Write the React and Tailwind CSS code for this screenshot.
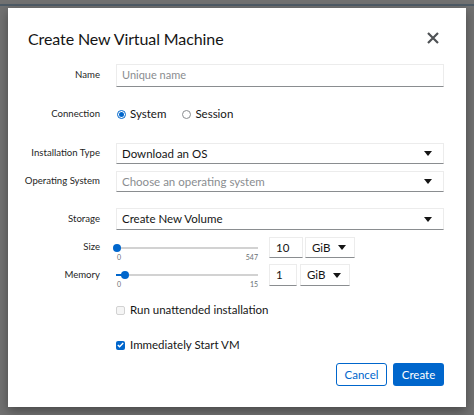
const font = { fontFamily: "Lato, 'Open Sans', sans-serif" };

function Caret({ className = "" }) {
  return (
    <svg className={className} width="8" height="5" viewBox="0 0 8 5">
      <path d="M0 0h8L4 5z" fill="#151515" />
    </svg>
  );
}

function Select({ value, placeholder }) {
  return (
    <div className="flex-1 h-full flex items-center justify-between pl-[5px] pr-[11px] border border-[#ececec] border-b-[#8a8d90] bg-white">
      <span className={value ? "text-[11.5px] text-[#151515]" : "text-[11.5px] text-[#8a8d90]"}>
        {value || placeholder}
      </span>
      <Caret />
    </div>
  );
}

function Row({ label, className = "", children }) {
  return (
    <div className={`flex items-center ${className}`}>
      <div className="w-[72px] shrink-0 flex justify-end whitespace-nowrap text-[9.6px] text-[#1f1f1f]">
        {label}
      </div>
      <div className="ml-[16px] flex-1 h-full flex items-center">{children}</div>
    </div>
  );
}

function Slider({ pos, max }) {
  return (
    <div className="w-[142px] flex flex-col self-start mt-[7px]">
      <div className="relative h-[8px] flex items-center">
        <div className="w-full h-[2px] bg-[#d2d2d2]" />
        <div className="absolute left-0 h-[2px] bg-[#0066cc]" style={{ width: pos }} />
        <div
          className="absolute w-[8px] h-[8px] rounded-full bg-[#0066cc]"
          style={{ left: pos - 4 }}
        />
      </div>
      <div className="flex justify-between text-[7px] leading-[8px] text-[#6a6e73] mt-[1px] pl-[1px]">
        <span>0</span>
        <span>{max}</span>
      </div>
    </div>
  );
}

function SizeInput({ value, inputW, gap }) {
  return (
    <div className="flex h-full ml-[11px]" style={{ gap }}>
      <div
        className="h-full flex items-center pl-[6px] border border-[#ececec] border-b-[#8a8d90] text-[11.5px] text-[#151515]"
        style={{ width: inputW }}
      >
        {value}
      </div>
      <div className="w-[50px] h-full flex items-center gap-[8px] pl-[6px] border border-[#ececec] border-b-[#8a8d90] text-[11.5px] text-[#151515]">
        GiB
        <Caret />
      </div>
    </div>
  );
}

export default function App() {
  return (
    <div className="w-[474px] h-[415px] bg-[#717171] overflow-hidden flex flex-col" style={font}>
      <div className="h-[4px]" />
      <div className="h-[2px] bg-[#4e5b66]" />
      <div className="ml-[8px] mt-[2px] w-[458px] h-[399px] bg-white shadow-[0_4px_10px_rgba(0,0,0,0.35)] flex flex-col pt-[20px] pl-[20px] pr-[22px]">
        <div className="h-[22px] flex items-center justify-between">
          <h1 className="text-[16px] leading-[22px] text-[#151515] tracking-[-0.1px]">
            Create New Virtual Machine
          </h1>
          <svg width="12" height="12" viewBox="0 0 12 12" className="mr-[5px] -mt-[2px]">
            <path d="M1 1l10 10M11 1L1 11" stroke="#4f5255" strokeWidth="2.2" />
          </svg>
        </div>

        <Row label="Name" className="mt-[14px] h-[23px]">
          <div className="flex-1 h-full flex items-center pl-[5px] border border-[#ececec] border-b-[#8a8d90] text-[11px] text-[#8a8d90]">
            Unique name
          </div>
        </Row>

        <Row label="Connection" className="mt-[17px] h-[20px]">
          <div className="flex items-center gap-[4px] pl-[1px]">
            <div className="w-[9px] h-[9px] rounded-full border border-[#0066cc] flex items-center justify-center">
              <div className="w-[5px] h-[5px] rounded-full bg-[#0066cc]" />
            </div>
            <span className="text-[11.5px] text-[#151515]">System</span>
          </div>
          <div className="flex items-center gap-[4px] ml-[16px]">
            <div className="w-[9px] h-[9px] rounded-full border border-[#8a8d90]" />
            <span className="text-[11.5px] text-[#151515]">Session</span>
          </div>
        </Row>

        <Row label="Installation Type" className="mt-[19px] h-[21px]">
          <Select value="Download an OS" />
        </Row>
        <Row label="Operating System" className="mt-[7px] h-[21px]">
          <Select placeholder="Choose an operating system" />
        </Row>
        <Row label="Storage" className="mt-[16px] h-[22px]">
          <Select value="Create New Volume" />
        </Row>

        <Row label="Size" className="mt-[7px] h-[21px]">
          <Slider pos={1} max="547" />
          <SizeInput value="10" inputW={34} gap={2} />
        </Row>
        <Row label="Memory" className="mt-[6px] h-[22px]">
          <Slider pos={9} max="15" />
          <SizeInput value="1" inputW={28} gap={3} />
        </Row>

        <div className="mt-[16px] h-[16px] ml-[88px] flex items-center gap-[5px]">
          <div className="w-[9px] h-[9px] rounded-[2px] border border-[#d2d2d2] bg-[#f5f5f5]" />
          <span className="text-[11.5px] text-[#151515]">Run unattended installation</span>
        </div>
        <div className="mt-[19px] h-[16px] ml-[88px] flex items-center gap-[5px]">
          <div className="w-[9px] h-[9px] rounded-[2px] bg-[#0066cc] flex items-center justify-center">
            <svg width="7" height="6" viewBox="0 0 7 6">
              <path d="M0.8 3l1.8 1.8L6.2 1" stroke="white" strokeWidth="1.4" fill="none" />
            </svg>
          </div>
          <span className="text-[11.5px] text-[#151515]">Immediately Start VM</span>
        </div>

        <div className="mt-[10px] h-[23px] flex justify-end gap-[6px]">
          <button className="w-[51px] h-full rounded-[3px] border border-[#0066cc] text-[#0066cc] text-[11.5px]">
            Cancel
          </button>
          <button className="w-[51px] h-full rounded-[3px] bg-[#0066cc] text-white text-[11.5px]">
            Create
          </button>
        </div>
      </div>
    </div>
  );
}
